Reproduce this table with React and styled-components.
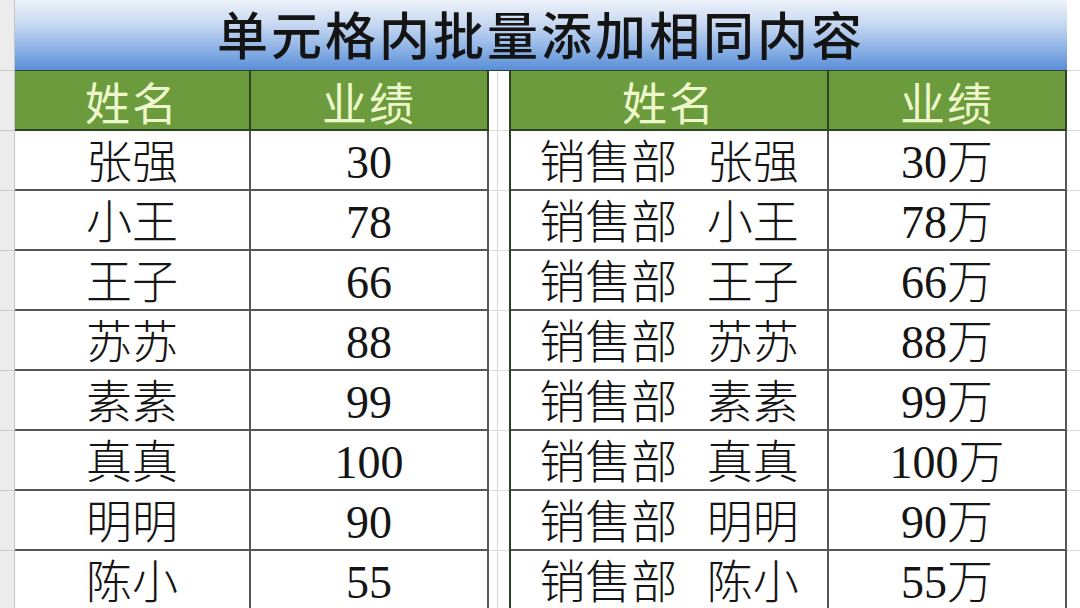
import React from "react";
import styled, { createGlobalStyle } from "styled-components";

const GlobalStyle = createGlobalStyle`
  html, body {
    margin: 0;
    padding: 0;
    background: #ffffff;
    overflow: hidden;
  }
  * {
    box-sizing: border-box;
  }
`;

const rows = [
  ["张强", "30"],
  ["小王", "78"],
  ["王子", "66"],
  ["苏苏", "88"],
  ["素素", "99"],
  ["真真", "100"],
  ["明明", "90"],
  ["陈小", "55"],
];

const Sheet = styled.div`
  display: grid;
  grid-template-columns: 15px 1052px 1fr;
  width: 1080px;
  height: 608px;
  overflow: hidden;
  font-family: "Liberation Serif", "Noto Sans CJK SC", serif;
`;

const Strip = styled.div`
  display: flex;
  flex-direction: column;
`;

const RowHead = styled.div`
  flex: none;
  height: ${(p) => p.$h}px;
  background: #ececec;
  border-right: 1px solid #c4c4c4;
  border-bottom: 1px solid #c9c9c9;
`;

const Filler = styled.div`
  flex: none;
  height: ${(p) => p.$h}px;
  border-bottom: 1px solid #dadada;
`;

const Main = styled.div`
  display: flex;
  flex-direction: column;
`;

const Title = styled.div`
  height: 71px;
  flex: none;
  display: flex;
  align-items: center;
  justify-content: center;
  padding-bottom: 2px;
  background: linear-gradient(#eef3fa 0%, #c6d8f1 35%, #8cb2e5 70%, #5a8ed8 100%);
  border-bottom: 1px solid #2e4224;
  font-family: "Noto Sans CJK SC", sans-serif;
  font-size: 51px;
  line-height: 1.2;
  font-weight: 500;
  letter-spacing: 3px;
  color: #141414;
`;

const Tables = styled.div`
  display: flex;
`;

const Table = styled.div`
  display: grid;
  grid-template-columns: ${(p) => p.$cols};
  grid-auto-rows: 60px;
  border-left: ${(p) => (p.$edge ? "2px solid #2e4224" : "none")};
`;

const HeadCell = styled.div`
  display: flex;
  align-items: center;
  justify-content: center;
  padding-top: 4px;
  background: #6b9b3d;
  border-right: 2px solid #2e4224;
  border-bottom: 2px solid #2e4224;
  font-family: "Noto Sans CJK SC", sans-serif;
  font-size: 45px;
  line-height: 1.1;
  color: #edf7cb;
  letter-spacing: 2px;
`;

const Cell = styled.div`
  display: flex;
  align-items: center;
  justify-content: center;
  border-right: 2px solid #575757;
  border-bottom: 2px solid #575757;
  font-size: 46px;
  line-height: 1.1;
  font-weight: 300;
  color: #151515;
  white-space: pre;
  word-spacing: 18px;
  padding-top: 6px;
`;

const Gap = styled.div`
  width: 20px;
  flex: none;
  display: flex;
  flex-direction: column;
  background: linear-gradient(
    to right,
    transparent 8px,
    #d6d6d6 8px,
    #d6d6d6 9px,
    transparent 9px
  );
`;

const GapCell = styled.div`
  height: 60px;
  flex: none;
  border-bottom: 1px solid #dedede;
`;

const heights = [71, 60, ...rows.map(() => 60)];

export default function App() {
  return (
    <>
      <GlobalStyle />
      <Sheet>
        <Strip>
          {heights.map((h, i) => (
            <RowHead key={i} $h={h} />
          ))}
        </Strip>
        <Main>
          <Title>单元格内批量添加相同内容</Title>
          <Tables>
            <Table $cols="236px 238px">
              <HeadCell>姓名</HeadCell>
              <HeadCell>业绩</HeadCell>
              {rows.map(([name, score]) => (
                <React.Fragment key={name}>
                  <Cell>{name}</Cell>
                  <Cell>{score}</Cell>
                </React.Fragment>
              ))}
            </Table>
            <Gap>
              {heights.slice(1).map((h, i) => (
                <GapCell key={i} />
              ))}
            </Gap>
            <Table $cols="318px 238px" $edge>
              <HeadCell>姓名</HeadCell>
              <HeadCell>业绩</HeadCell>
              {rows.map(([name, score]) => (
                <React.Fragment key={name}>
                  <Cell>{`销售部 ${name}`}</Cell>
                  <Cell>{`${score}万`}</Cell>
                </React.Fragment>
              ))}
            </Table>
          </Tables>
        </Main>
        <Strip>
          {heights.map((h, i) => (
            <Filler key={i} $h={h} />
          ))}
        </Strip>
      </Sheet>
    </>
  );
}
